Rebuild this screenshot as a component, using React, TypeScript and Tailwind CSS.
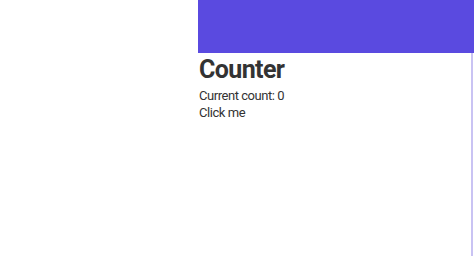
export default function App() {
  return (
    <div className="flex h-[256px] w-[474px] bg-white font-['Roboto',sans-serif] text-[#333333]">
      <div className="w-[198px] shrink-0 bg-white" />
      <div className="flex flex-1 flex-col">
        <div className="h-[53px] shrink-0 bg-[#5a4ae0]" />
        <div className="flex flex-1">
          <div className="flex flex-1 flex-col items-start pl-px">
            <h1 className="m-0 text-[25px] font-bold leading-[34px] tracking-[-0.6px]">Counter</h1>
            <p className="text-[13px] leading-[17px] tracking-[-0.45px]">Current count: 0</p>
            <button className="text-[13px] leading-[17px] tracking-[-0.45px]">Click me</button>
          </div>
          <div className="w-[2px] shrink-0 bg-[#c9c3f3]" />
          <div className="w-px shrink-0 bg-white" />
        </div>
      </div>
    </div>
  );
}
